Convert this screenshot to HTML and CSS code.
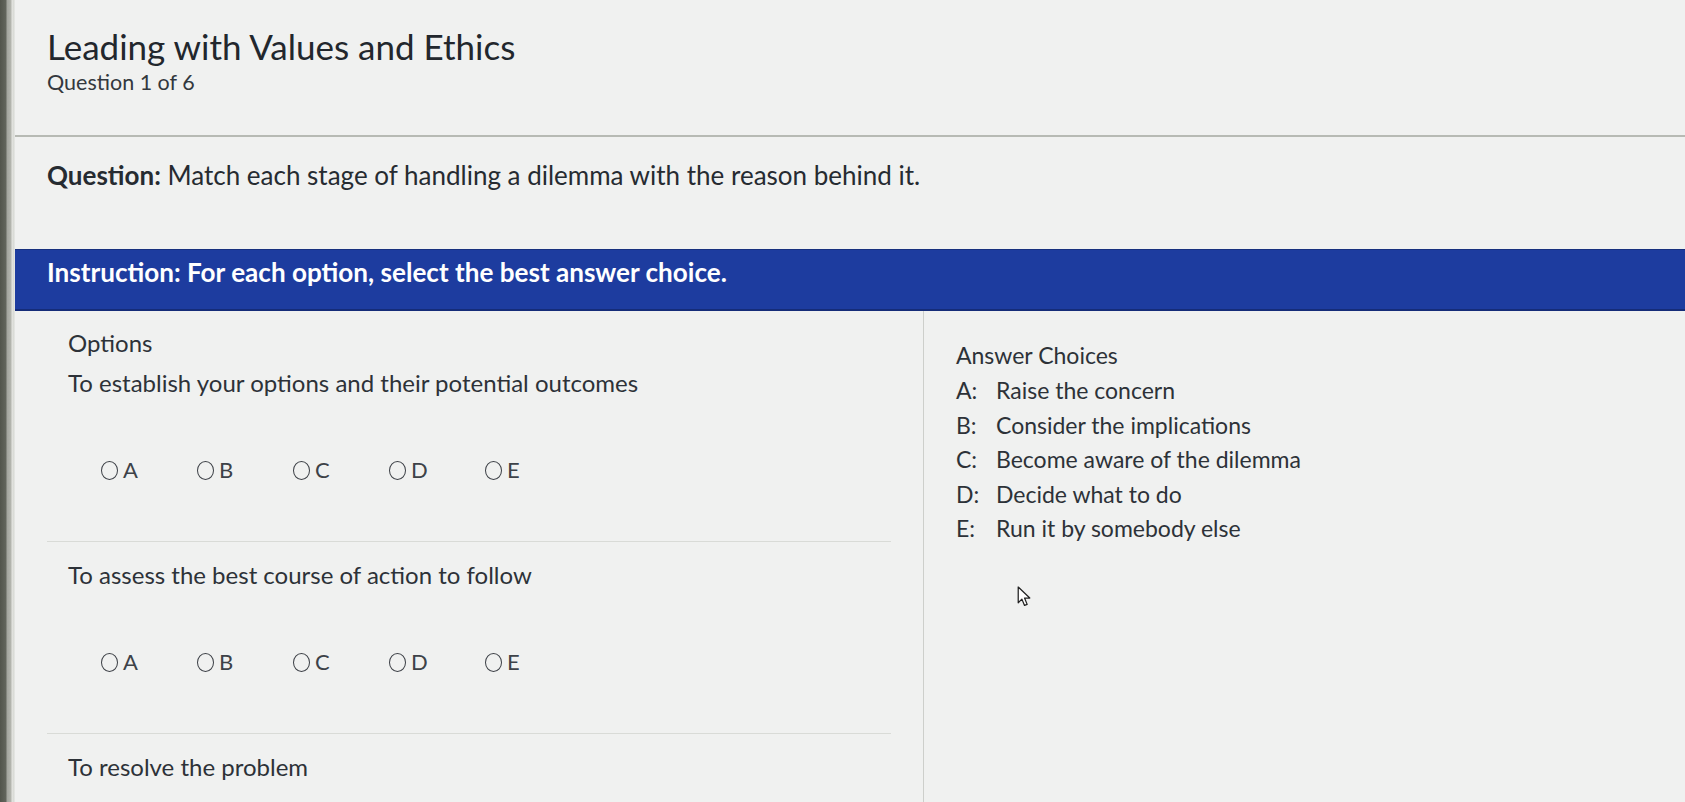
FILE: index.html
```html
<!DOCTYPE html>
<html lang="en">
<head>
<meta charset="utf-8">
<title>Leading with Values and Ethics</title>
<link rel="stylesheet" href="styles.css">
</head>
<body>
<div class="screen">
  <div class="bezel"></div>
  <main class="page">
    <header class="head">
      <h1 class="title">Leading with Values and Ethics</h1>
      <p class="count">Question 1 of 6</p>
    </header>
    <section class="question">
      <p><strong>Question:</strong> Match each stage of handling a dilemma with the reason behind it.</p>
    </section>
    <div class="instruction">Instruction: For each option, select the best answer choice.</div>
    <div class="matching">
      <div class="options">
        <h2 class="col-title">Options</h2>
        <div class="item">
          <p class="item-text">To establish your options and their potential outcomes</p>
          <div class="radios">
            <label class="radio"><span class="dot"></span>A</label>
            <label class="radio"><span class="dot"></span>B</label>
            <label class="radio"><span class="dot"></span>C</label>
            <label class="radio"><span class="dot"></span>D</label>
            <label class="radio"><span class="dot"></span>E</label>
          </div>
        </div>
        <div class="item">
          <p class="item-text">To assess the best course of action to follow</p>
          <div class="radios">
            <label class="radio"><span class="dot"></span>A</label>
            <label class="radio"><span class="dot"></span>B</label>
            <label class="radio"><span class="dot"></span>C</label>
            <label class="radio"><span class="dot"></span>D</label>
            <label class="radio"><span class="dot"></span>E</label>
          </div>
        </div>
        <div class="item">
          <p class="item-text">To resolve the problem</p>
        </div>
      </div>
      <div class="choices">
        <h2 class="choices-title">Answer Choices</h2>
        <dl class="choice-list">
          <dt>A:</dt><dd>Raise the concern</dd>
          <dt>B:</dt><dd>Consider the implications</dd>
          <dt>C:</dt><dd>Become aware of the dilemma</dd>
          <dt>D:</dt><dd>Decide what to do</dd>
          <dt>E:</dt><dd>Run it by somebody else</dd>
        </dl>
        <svg class="cursor" width="14" height="21" viewBox="0 0 13 20" aria-hidden="true">
          <path d="M1 1 L1 16 L4.5 12.5 L7 18.5 L9.5 17.5 L7 11.5 L12 11.5 Z" fill="#ffffff" stroke="#222" stroke-width="1.2" stroke-linejoin="round"/>
        </svg>
      </div>
    </div>
  </main>
</div>
</body>
</html>
```

FILE: styles.css
```css
* { box-sizing: border-box; }

html, body {
  margin: 0;
  padding: 0;
  background: #f0f1f0;
}

body {
  font-family: Lato, "Open Sans", "Liberation Sans", sans-serif;
  color: #2d3238;
  width: 1685px;
  height: 802px;
  overflow: hidden;
}

.screen {
  display: flex;
  height: 802px;
  overflow: hidden;
}

.bezel {
  flex: 0 0 15px;
  background: linear-gradient(to right, #52554c 0, #63665d 6px, #a3a59e 7px, #b4b6af 11px, #e4e5e1 12px, #d6d8d3 14px, #f0f1f0 15px);
}

.page {
  flex: 1;
  display: flex;
  flex-direction: column;
  min-width: 0;
  overflow: hidden;
}

.head,
.question,
.instruction {
  flex: none;
}

.head {
  padding: 26px 32px 40px;
  border-bottom: 2px solid #b7bab4;
}

.title {
  margin: 0;
  font-size: 35px;
  line-height: 40px;
  font-weight: 400;
  color: #22272d;
}

.count {
  margin: 3px 0 0;
  font-size: 21.5px;
  line-height: 26px;
  color: #33383e;
}

.question {
  padding: 22px 32px 0;
  height: 112px;
}

.question p {
  margin: 0;
  font-size: 26px;
  line-height: 32px;
  color: #262b31;
}

.question strong {
  font-weight: 700;
}

.instruction {
  height: 62px;
  padding: 6px 32px 0;
  background: #1d3c9f;
  border-top: 1px solid #17307e;
  border-bottom: 2px solid #152c78;
  color: #ffffff;
  font-size: 26.1px;
  line-height: 32px;
  font-weight: 700;
}

.matching {
  flex: 1;
  display: flex;
  min-height: 0;
  overflow: hidden;
}

.options {
  flex: 0 0 909px;
  padding: 18px 32px 0;
  border-right: 1px solid #cdcfcb;
}

.col-title {
  margin: 0 0 12px 21px;
  font-size: 24px;
  line-height: 28px;
  font-weight: 400;
  color: #2d3238;
}

.item {
  padding: 0 0 59px;
}

.item + .item {
  border-top: 1px solid #d9dbd7;
  padding-top: 19px;
}

.item-text {
  margin: 0 0 61px 21px;
  font-size: 24px;
  line-height: 28px;
  color: #2d3238;
}

.radios {
  display: grid;
  grid-template-columns: repeat(5, 96px);
  margin-left: 54px;
  height: 24px;
  align-items: center;
}

.radio {
  display: flex;
  align-items: center;
  gap: 5px;
  font-size: 22px;
  line-height: 24px;
  color: #3d4248;
}

.dot {
  flex: none;
  width: 17px;
  height: 19px;
  border: 1.8px solid #3b3f45;
  border-radius: 50%;
  background: transparent;
}

.choices {
  flex: 1;
  position: relative;
  padding: 30px 32px 0;
}

.choices-title {
  margin: 0 0 4px;
  font-size: 23px;
  line-height: 28px;
  font-weight: 400;
  color: #2d3238;
}

.choice-list {
  margin: 0;
  display: grid;
  grid-template-columns: 40px auto;
  justify-content: start;
  font-size: 23px;
  line-height: 34.5px;
  color: #2d3238;
}

.choice-list dt,
.choice-list dd {
  margin: 0;
}

.cursor {
  position: absolute;
  left: 93px;
  top: 275px;
}
```
